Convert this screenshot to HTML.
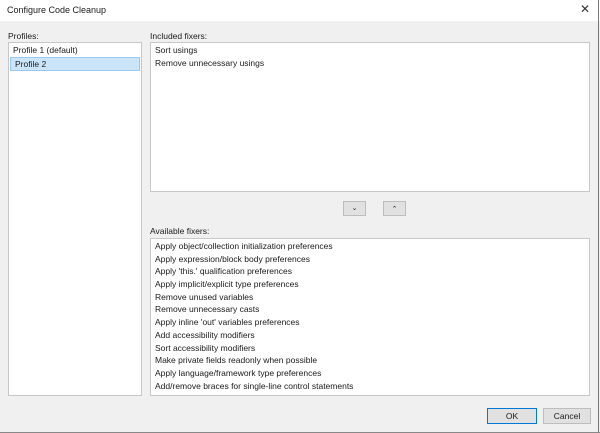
<html><head><style>
body{margin:0;width:600px;height:433px;background:#f0f0f0;font-family:"Liberation Sans",sans-serif;font-size:8.5px;color:#1a1a1a;position:relative;overflow:hidden}
.a{position:absolute}
.box{position:absolute;background:#fff;border:1px solid #c8c8c8;box-sizing:border-box}
.it{height:12.7px;line-height:12.7px;padding-left:4px;white-space:nowrap}
.btn{position:absolute;background:#e1e1e1;border:1px solid #bdbdbd;box-sizing:border-box;text-align:center}
</style></head><body>
<div class="a" style="left:0;top:0;width:600px;height:21px;background:#fff"></div>
<div class="a" style="left:7px;top:5px;font-size:9px">Configure Code Cleanup</div>
<div class="a" style="left:580px;top:2px;font-size:12px;color:#333">✕</div>
<div class="a" style="left:598px;top:0;width:1px;height:433px;background:#777"></div>
<div class="a" style="left:0;top:432px;width:600px;height:1px;background:#888"></div>
<div class="a" style="left:8px;top:31px">Profiles:</div>
<div class="a" style="left:150px;top:31px">Included fixers:</div>
<div class="box" style="left:8px;top:42px;width:134px;height:354px;padding-top:1px">
<div class="it" style="padding-left:4px">Profile 1 (default)</div>
<div class="it" style="background:#cce4f7;border:1px solid #99c9ef;margin:0 1px">Profile 2</div>
</div>
<div class="box" style="left:150px;top:42px;width:440px;height:150px;padding-top:1px">
<div class="it">Sort usings</div><div class="it">Remove unnecessary usings</div>
</div>
<div class="btn" style="left:343px;top:201px;width:23px;height:15px;font-size:7px;line-height:13px">⌄</div>
<div class="btn" style="left:383px;top:201px;width:23px;height:15px;font-size:7px;line-height:15px">⌃</div>
<div class="a" style="left:150px;top:226px">Available fixers:</div>
<div class="box" style="left:150px;top:238px;width:440px;height:158px;padding-top:1px">
<div class="it">Apply object/collection initialization preferences</div>
<div class="it">Apply expression/block body preferences</div>
<div class="it">Apply 'this.' qualification preferences</div>
<div class="it">Apply implicit/explicit type preferences</div>
<div class="it">Remove unused variables</div>
<div class="it">Remove unnecessary casts</div>
<div class="it">Apply inline 'out' variables preferences</div>
<div class="it">Add accessibility modifiers</div>
<div class="it">Sort accessibility modifiers</div>
<div class="it">Make private fields readonly when possible</div>
<div class="it">Apply language/framework type preferences</div>
<div class="it">Add/remove braces for single-line control statements</div>
</div>
<div class="btn" style="left:487px;top:408px;width:50px;height:16px;line-height:14px;border-color:#0078d7">OK</div>
<div class="btn" style="left:543px;top:408px;width:48px;height:16px;line-height:14px">Cancel</div>
</body></html>
